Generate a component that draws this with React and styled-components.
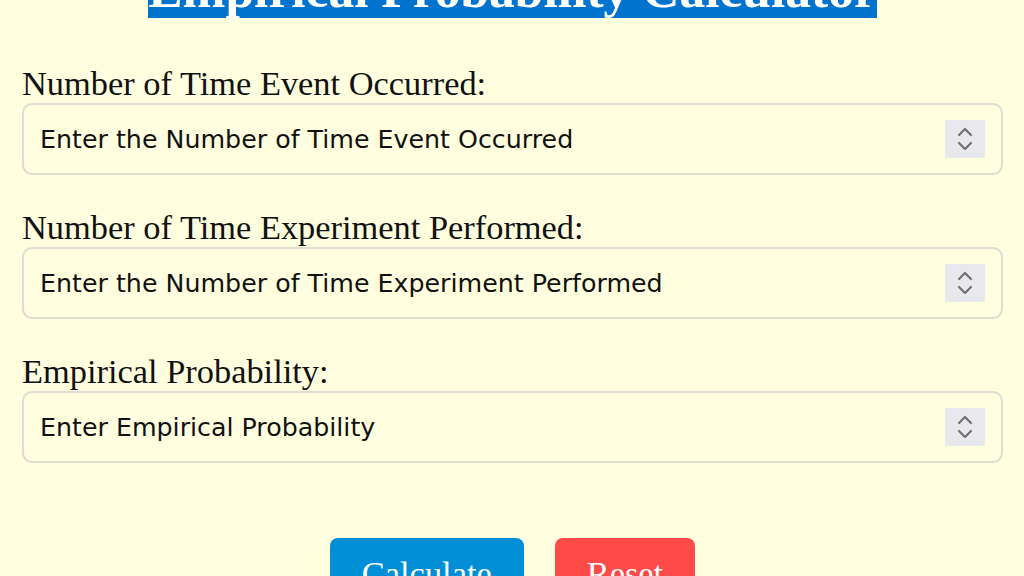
import React from 'react'
import styled, { createGlobalStyle } from 'styled-components'

const Global = createGlobalStyle`
  html, body {
    margin: 0;
    padding: 0;
    background: #ffffe0;
    overflow: hidden;
  }
`

const Page = styled.div`
  padding: 0 21px 0 22px;
  font-family: "Liberation Serif", "Times New Roman", serif;
`

const Title = styled.h1`
  margin: -39px 0 46px;
  text-align: center;
  font-size: 51.5px;
  line-height: 57px;
  font-weight: 700;
  color: #fff;

  span {
    background: #0073cf;
  }
`

const Field = styled.div`
  margin-bottom: 33px;
`

const Label = styled.label`
  display: block;
  font-size: 34.4px;
  line-height: 39px;
  color: #111;
`

const InputWrap = styled.div`
  position: relative;
`

const Input = styled.input`
  box-sizing: border-box;
  width: 100%;
  height: 72px;
  padding: 0 70px 0 16px;
  border: 2px solid #dcdcd0;
  border-radius: 10px;
  background: transparent;
  font-family: "DejaVu Sans", Verdana, sans-serif;
  font-size: 25.3px;
  color: #111;
  outline: none;
  -moz-appearance: textfield;

  &::placeholder {
    color: #111;
    opacity: 1;
  }
  &::-webkit-inner-spin-button,
  &::-webkit-outer-spin-button {
    -webkit-appearance: none;
    margin: 0;
  }
`

const Spinner = styled.span`
  position: absolute;
  right: 18px;
  top: 17px;
  width: 40px;
  height: 38px;
  background: #e9e9ed;
  display: flex;
  align-items: center;
  justify-content: center;
`

const Buttons = styled.div`
  display: flex;
  justify-content: center;
  gap: 31px;
  margin-top: 75px;
`

const Button = styled.button`
  border: none;
  border-radius: 8px;
  padding: 16px 32px;
  font-family: "Liberation Serif", "Times New Roman", serif;
  font-size: 34.4px;
  color: #fff;
  background: ${(p) => p.$bg};
  cursor: pointer;
`

const SpinIcon = () => (
  <svg width="20" height="30" viewBox="0 0 20 30" fill="none" stroke="#707070" strokeWidth="2.2" strokeLinecap="round" strokeLinejoin="round">
    <path d="M4 11 L10 5 L16 11" />
    <path d="M4 19 L10 25 L16 19" />
  </svg>
)

const fields = [
  ['Number of Time Event Occurred:', 'Enter the Number of Time Event Occurred'],
  ['Number of Time Experiment Performed:', 'Enter the Number of Time Experiment Performed'],
  ['Empirical Probability:', 'Enter Empirical Probability'],
]

export default function App() {
  return (
    <Page>
      <Global />
      <Title><span>Empirical Probability Calculator</span></Title>
      {fields.map(([label, ph], i) => (
        <Field key={i}>
          <Label htmlFor={'f' + i}>{label}</Label>
          <InputWrap>
            <Input id={'f' + i} type="number" placeholder={ph} />
            <Spinner><SpinIcon /></Spinner>
          </InputWrap>
        </Field>
      ))}
      <Buttons>
        <Button $bg="#008fd6">Calculate</Button>
        <Button $bg="#ff4a4a">Reset</Button>
      </Buttons>
    </Page>
  )
}
